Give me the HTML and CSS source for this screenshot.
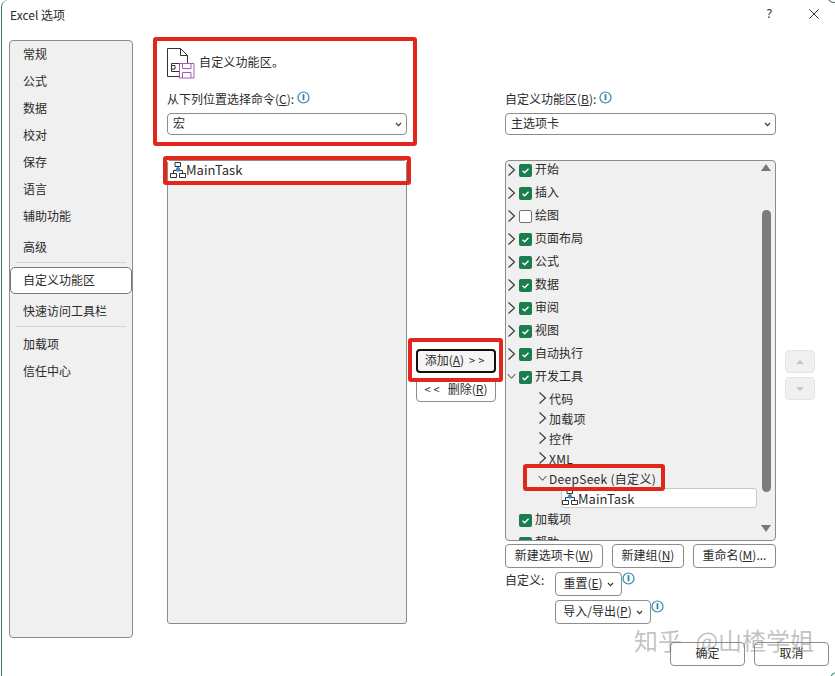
FILE: index.html
```html
<!DOCTYPE html>
<html lang="zh-CN">
<head>
<meta charset="utf-8">
<title>Excel 选项</title>
<link rel="stylesheet" href="styles.css">
</head>
<body>
<svg class="defs" width="0" height="0" aria-hidden="true">
  <symbol id="org" viewBox="0 0 16 16">
    <g fill="#fff" stroke="#333" stroke-width="1">
      <path d="M5 .5h5.500v4H5zM.5 11.500h6v4h-6zM9.500 11.500h6v4h-6z"/>
    </g>
    <path d="M8 4.500v4M3.500 11.500v-3h9v3" fill="none" stroke="#333"/>
    <circle cx="8" cy="7.500" r="2.200" fill="#3d8bd4"/>
  </symbol>
  <symbol id="info" viewBox="0 0 13 13">
    <circle cx="6.500" cy="6.500" r="5.500" fill="#fff" stroke="#2f86a8" stroke-width="1.200"/>
    <path d="M6.500 3.200v6" stroke="#2f86a8" stroke-width="1.800"/>
  </symbol>
  <symbol id="right" viewBox="0 0 9 14"><path d="M1.500 1.500 7.500 7l-6 5.500" fill="none" stroke="#333" stroke-width="1.100"/></symbol>
  <symbol id="down" viewBox="0 0 10 7"><path d="M.8.800 5 5.500 9.200.800" fill="none" stroke="#333" stroke-width="1.100"/></symbol>
  <symbol id="caret" viewBox="0 0 7 5"><path d="M1 1 3.500 3.600 6 1" fill="none" stroke="#333" stroke-width="1.100"/></symbol>
  <symbol id="check" viewBox="0 0 13 13"><rect width="13" height="13" rx="2" fill="#1a7d4d"/><path d="M3.500 6.800 5.700 8.800 9.500 4.800" fill="none" stroke="#fff" stroke-width="1.400"/></symbol>
</svg>

<div class="dialog">
  <header class="titlebar">
    <span class="title">Excel 选项</span>
    <div class="winbtns">
      <span class="help">?</span>
      <svg class="close" width="10" height="10" viewBox="0 0 10 10"><path d="M.4.400l9.200 9.200M9.600.400l-9.200 9.200" stroke="#333" stroke-width="1"/></svg>
    </div>
  </header>

  <main class="body">
    <nav class="nav">
      <div class="nav-item">常规</div>
      <div class="nav-item">公式</div>
      <div class="nav-item">数据</div>
      <div class="nav-item">校对</div>
      <div class="nav-item">保存</div>
      <div class="nav-item">语言</div>
      <div class="nav-item">辅助功能</div>
      <div class="nav-item nav-gap">高级</div>
      <div class="nav-sep"></div>
      <div class="nav-item nav-selected">自定义功能区</div>
      <div class="nav-item">快速访问工具栏</div>
      <div class="nav-sep"></div>
      <div class="nav-item">加载项</div>
      <div class="nav-item">信任中心</div>
    </nav>

    <section class="col col-left">
      <div class="intro">
        <svg class="doc-icon" width="28" height="32" viewBox="0 0 28 32">
          <path d="M.5 1.500h13l7 7v21H.5z" fill="#fff" stroke="#333"/>
          <path d="M13.500 1.500v7h7" fill="none" stroke="#333"/>
          <path d="M4.500 16.500h8v8h-8zM4.500 18.500h3.500v3.500h-3.500z" fill="#fff" stroke="#333"/>
          <path d="M12.500 16.500h14.500v14.500h-14.500z" fill="#fff" stroke="#a35cb0"/>
          <path d="M15.500 16.500v5h8.500v-5M15.500 31v-5.500h8.500v5.500" fill="none" stroke="#a35cb0"/>
        </svg>
        <span>自定义功能区。</span>
      </div>
      <div class="label">从下列位置选择命令(<u>C</u>):<svg class="info-top" width="13" height="13"><use href="#info"/></svg></div>
      <div class="select"><span>宏</span><svg width="7" height="5"><use href="#caret"/></svg></div>
      <div class="list">
        <div class="list-row">
          <svg width="16" height="16"><use href="#org"/></svg><span>MainTask</span>
        </div>
      </div>
    </section>

    <section class="col-mid">
      <button class="btn btn-add" type="button"><span>添加(<u>A</u>)</span><span class="arrows">&gt;&gt;</span></button>
      <button class="btn btn-del" type="button"><span class="arrows">&lt;&lt;</span><span>删除(<u>R</u>)</span></button>
    </section>

    <section class="col col-right">
      <div class="intro intro-empty"></div>
      <div class="label">自定义功能区(<u>B</u>):<svg class="info-top" width="13" height="13"><use href="#info"/></svg></div>
      <div class="select"><span>主选项卡</span><svg width="7" height="5"><use href="#caret"/></svg></div>
      <div class="tree">
        <div class="tree-rows">
          <div class="row"><svg class="chev" width="9" height="14"><use href="#right"/></svg><svg width="13" height="13"><use href="#check"/></svg><span>开始</span></div>
          <div class="row"><svg class="chev" width="9" height="14"><use href="#right"/></svg><svg width="13" height="13"><use href="#check"/></svg><span>插入</span></div>
          <div class="row"><svg class="chev" width="9" height="14"><use href="#right"/></svg><i class="unchecked"></i><span>绘图</span></div>
          <div class="row"><svg class="chev" width="9" height="14"><use href="#right"/></svg><svg width="13" height="13"><use href="#check"/></svg><span>页面布局</span></div>
          <div class="row"><svg class="chev" width="9" height="14"><use href="#right"/></svg><svg width="13" height="13"><use href="#check"/></svg><span>公式</span></div>
          <div class="row"><svg class="chev" width="9" height="14"><use href="#right"/></svg><svg width="13" height="13"><use href="#check"/></svg><span>数据</span></div>
          <div class="row"><svg class="chev" width="9" height="14"><use href="#right"/></svg><svg width="13" height="13"><use href="#check"/></svg><span>审阅</span></div>
          <div class="row"><svg class="chev" width="9" height="14"><use href="#right"/></svg><svg width="13" height="13"><use href="#check"/></svg><span>视图</span></div>
          <div class="row"><svg class="chev" width="9" height="14"><use href="#right"/></svg><svg width="13" height="13"><use href="#check"/></svg><span>自动执行</span></div>
          <div class="row"><svg class="chev" width="9" height="7"><use href="#down"/></svg><svg width="13" height="13"><use href="#check"/></svg><span>开发工具</span></div>
          <div class="child"><svg class="chev" width="9" height="14"><use href="#right"/></svg><span>代码</span></div>
          <div class="child"><svg class="chev" width="9" height="14"><use href="#right"/></svg><span>加载项</span></div>
          <div class="child"><svg class="chev" width="9" height="14"><use href="#right"/></svg><span>控件</span></div>
          <div class="child"><svg class="chev" width="9" height="14"><use href="#right"/></svg><span>XML</span></div>
          <div class="child"><svg class="chev" width="9" height="7"><use href="#down"/></svg><span>DeepSeek (自定义)</span></div>
          <div class="leaf"><svg width="16" height="16"><use href="#org"/></svg><span>MainTask</span></div>
          <div class="row row-nochev"><svg width="13" height="13"><use href="#check"/></svg><span>加载项</span></div>
          <div class="row row-nochev"><svg width="13" height="13"><use href="#check"/></svg><span>帮助</span></div>
        </div>
        <div class="scrollbar">
          <i class="arrow-up"></i>
          <i class="thumb"></i>
          <i class="arrow-down"></i>
        </div>
      </div>
      <div class="btn-row">
        <button class="btn tab-new" type="button"><span>新建选项卡(<u>W</u>)</span></button>
        <button class="btn group-new" type="button"><span>新建组(<u>N</u>)</span></button>
        <button class="btn rename" type="button"><span>重命名(<u>M</u>)...</span></button>
      </div>
      <div class="custom">
        <span class="custom-label">自定义:</span>
        <div class="custom-btns">
          <div class="custom-line">
            <button class="btn reset" type="button"><span>重置(<u>E</u>)</span><svg width="7" height="5"><use href="#caret"/></svg></button>
            <svg class="info-side" width="13" height="13"><use href="#info"/></svg>
          </div>
          <div class="custom-line">
            <button class="btn io" type="button"><span>导入/导出(<u>P</u>)</span><svg width="7" height="5"><use href="#caret"/></svg></button>
            <svg class="info-side" width="13" height="13"><use href="#info"/></svg>
          </div>
        </div>
      </div>
    </section>

    <aside class="updown">
      <span class="ud"><i class="mini-up"></i></span>
      <span class="ud"><i class="mini-down"></i></span>
    </aside>
  </main>

  <footer class="footer">
    <button class="btn foot" type="button"><span>确定</span></button>
    <button class="btn foot" type="button"><span>取消</span></button>
  </footer>
</div>

<div class="mark mark-a"></div>
<div class="mark mark-b"></div>
<div class="mark mark-c"></div>
<div class="mark mark-d"></div>
<div class="corner corner-tr"></div>
<div class="corner corner-br"></div>
<div class="watermark">知乎 @山楂学姐</div>
</body>
</html>
```

FILE: styles.css
```css
* { box-sizing: border-box; }
html, body { margin: 0; padding: 0; }
body {
  width: 835px;
  height: 676px;
  position: relative;
  overflow: hidden;
  background: #fff;
  font-family: "Noto Sans CJK SC", "Noto Sans", sans-serif;
  font-size: 12px;
  color: #2b2b2b;
}
.defs { position: absolute; }
svg { display: block; flex: none; }
i { display: block; }

.dialog {
  width: 834px;
  height: 676px;
  margin-left: 1px;
  border-left: 1px solid #2f7d5b;
  border-top-left-radius: 7px;
  display: flex;
  flex-direction: column;
  background: #fff;
}

.titlebar {
  height: 40px;
  padding: 6px 16px 0 8px;
  display: flex;
  justify-content: space-between;
  align-items: flex-start;
}
.title { line-height: 18px; font-size: 12px; }
.winbtns { display: flex; align-items: center; gap: 37px; height: 16px; }
.help { font-size: 12px; line-height: 16px; font-family: "Noto Sans", sans-serif; }

.body { display: flex; height: 598px; padding-left: 7px; }

.nav {
  width: 124px;
  height: 598px;
  background: #f0f0f0;
  border: 1px solid #8c8c8c;
  border-radius: 4px;
  flex: none;
}
.nav-item {
  height: 27px;
  line-height: 25px;
  padding-left: 13px;
}
.nav-gap { margin-top: 4px; }
.nav-sep { height: 1px; margin: 1px 6px 4px; background: #d6d6d6; }
.nav-selected {
  margin: 0 0 4px;
  padding-left: 12px;
  background: #fff;
  border: 1px solid #777;
  border-radius: 5px;
  line-height: 24px;
}

.col { display: flex; flex-direction: column; flex: none; }
.col-left { width: 240px; margin-left: 34px; }
.col-right { width: 271px; }
.intro {
  height: 45px;
  margin-top: 7px;
  display: flex;
  align-items: flex-start;
  gap: 4px;
  font-size: 12px;
}
.intro span { margin-top: 6px; line-height: 18px; letter-spacing: .15px; }
.label {
  height: 13px;
  line-height: 11px;
  display: flex;
  align-items: center;
}
.label u, .btn u { text-underline-offset: 1px; }
.info-top { margin-left: 3px; margin-top: -3px; }
.select {
  height: 22px;
  margin-top: 8px;
  padding: 0 4px 3px 5px;
  border: 1px solid #8c8c8c;
  border-radius: 4px;
  display: flex;
  align-items: center;
  justify-content: space-between;
  background: #fff;
}
.select svg { margin-top: 3px; }
.list {
  height: 464px;
  margin-top: 25px;
  background: #f0f0f0;
  border: 1px solid #8c8c8c;
  border-radius: 3px;
}
.list-row {
  height: 22px;
  background: #fff;
  display: flex;
  align-items: flex-start;
  padding-left: 2px;
  font-size: 13px;
}
.list-row svg { margin-top: 1px; }
.list-row span { line-height: 18px; }

.col-mid {
  width: 98px;
  flex: none;
  padding: 309px 9px 0;
  display: flex;
  flex-direction: column;
  gap: 5px;
}
.btn {
  font: inherit;
  color: inherit;
  padding: 0 0 3px;
  background: #fff;
  border: 1px solid #8c8c8c;
  border-radius: 4px;
  display: flex;
  align-items: center;
  justify-content: center;
}
.btn-add, .btn-del { width: 80px; height: 24px; gap: 5px; }
.btn-add { border: 2px solid #111; background: #f5f5f5; }
.arrows { letter-spacing: 3px; font-size: 11px; }

.tree {
  height: 381px;
  margin-top: 25px;
  border: 1px solid #8c8c8c;
  border-radius: 4px;
  background: #f0f0f0;
  overflow: hidden;
  display: flex;
}
.tree-rows { flex: 1; margin-top: -3px; padding-left: 1px; }
.row { height: 23px; display: flex; align-items: center; gap: 3px; }
.row span { margin-top: -3px; }
.row svg + svg, .unchecked { margin-top: 2px; }
.row-nochev { padding-left: 12px; }
.row-nochev svg { margin-top: 2px; }
.chev { width: 9px; }
.unchecked {
  width: 13px;
  height: 13px;
  background: #fff;
  border: 1px solid #777;
  border-radius: 2px;
}
.child {
  height: 20px;
  display: flex;
  align-items: center;
  gap: 2px;
  padding-left: 31px;
  font-size: 12px;
  letter-spacing: .3px;
}
.leaf {
  height: 20px;
  margin: 0 1px 0 54px;
  padding-left: 2px;
  background: #fff;
  border: 1px solid #c8c8c8;
  border-radius: 3px;
  display: flex;
  align-items: center;
  font-size: 13px;
  overflow: visible;
}
.leaf svg { margin-left: -2px; margin-top: -3px; }

.scrollbar {
  width: 17px;
  flex: none;
  padding: 3px 4px 0 3px;
  display: flex;
  flex-direction: column;
  align-items: center;
}
.arrow-up {
  width: 0; height: 0;
  border: 5px solid transparent;
  border-top: 0;
  border-bottom: 7px solid #777;
}
.thumb {
  width: 9px;
  height: 282px;
  margin-top: 39px;
  background: #7b7b7b;
  border-radius: 5px;
}
.arrow-down {
  width: 0; height: 0;
  margin-top: 33px;
  border: 5px solid transparent;
  border-bottom: 0;
  border-top: 7px solid #777;
}

.btn-row { display: flex; justify-content: space-between; margin-top: 3px; }
.btn-row .btn { height: 24px; }
.tab-new { width: 98px; }
.group-new { width: 72px; }
.rename { width: 83px; }

.custom { display: flex; margin-top: 4px; }
.custom-label { width: 50px; line-height: 15px; }
.custom-btns { display: flex; flex-direction: column; gap: 4px; }
.custom-line { display: flex; }
.custom-line .btn { height: 24px; gap: 4px; }
.custom-line .btn svg { margin-top: 4px; }
.reset { width: 67px; }
.io { width: 96px; }
.info-side { margin-left: 0; }

.updown {
  width: 30px;
  margin-left: 9px;
  padding-top: 310px;
  display: flex;
  flex-direction: column;
  gap: 4px;
  flex: none;
}
.ud {
  height: 23px;
  background: #f0f0f0;
  border: 1px solid #e4e4e4;
  border-radius: 4px;
  display: flex;
  align-items: center;
  justify-content: center;
}
.mini-up { width: 0; height: 0; border: 4px solid transparent; border-top: 0; border-bottom: 4px solid #c6c6c6; }
.mini-down { width: 0; height: 0; border: 4px solid transparent; border-bottom: 0; border-top: 4px solid #c6c6c6; }

.footer {
  display: flex;
  justify-content: flex-end;
  gap: 9px;
  margin-top: 4px;
  padding-right: 6px;
}
.foot { width: 75px; height: 24px; }

.mark {
  position: absolute;
  border: 4px solid #e1261c;
  border-radius: 3px;
}
.mark-a { left: 153px; top: 37px; width: 264px; height: 109px; }
.mark-b { left: 163px; top: 156px; width: 248px; height: 29px; }
.mark-c { left: 408px; top: 338px; width: 95px; height: 44px; }
.mark-d { left: 523px; top: 464px; width: 142px; height: 27px; }

.corner {
  position: absolute;
  width: 8px;
  height: 8px;
  border: 1px solid #2f7d5b;
}
.corner-tr { right: 0; top: -5px; border-radius: 0 0 0 7px; border-width: 0 0 1px 1px; }
.corner-br { right: -3px; bottom: -4px; border-radius: 7px 0 0 0; border-width: 1px 0 0 1px; }

.watermark {
  position: absolute;
  left: 634px;
  top: 623px;
  font-size: 24px;
  line-height: 34px;
  word-spacing: 8px;
  white-space: nowrap;
  color: rgba(120, 120, 120, .45);
}
```
